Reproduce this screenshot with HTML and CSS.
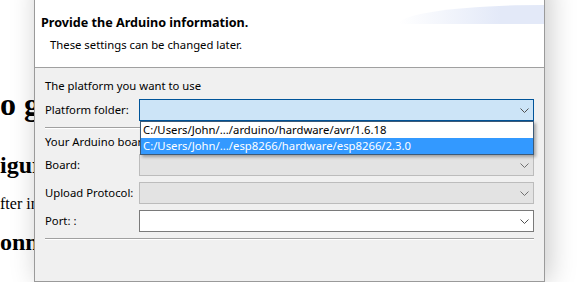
FILE: index.html
```html
<!DOCTYPE html>
<html lang="en">
<head>
    <meta charset="UTF-8">
    <meta name="viewport" content="width=device-width, initial-scale=1.0">
    <title>Arduino information</title>
    <link rel="stylesheet" href="styles.css">
</head>
<body>
    <!-- Page behind the dialog -->
    <div class="page">
        <h1>o ge</h1>
        <h2>igur</h2>
        <p>fter ins</p>
        <h2 class="last">onne</h2>
    </div>

    <!-- Wizard dialog -->
    <div class="dialog">
        <div class="dialog-head">
            <div class="swoosh"></div>
            <div class="head-title">Provide the Arduino information.</div>
            <div class="head-sub">These settings can be changed later.</div>
        </div>

        <div class="dialog-body">
            <div class="group-title">The platform you want to use</div>
            <div class="row">
                <label class="label">Platform folder:</label>
                <div class="combo combo-focus">
                    <svg class="chevron" width="9" height="5" viewBox="0 0 9 5"><polyline points="0.5,0.5 4.5,4.5 8.5,0.5" fill="none" stroke="#505050" stroke-width="1"/></svg>
                    <ul class="popup">
                        <li>C:/Users/John/.../arduino/hardware/avr/1.6.18</li>
                        <li class="selected">C:/Users/John/.../esp8266/hardware/esp8266/2.3.0</li>
                    </ul>
                </div>
            </div>

            <div class="sep"></div>

            <div class="group-title second">Your Arduino board specifications</div>
            <div class="row board">
                <label class="label">Board:</label>
                <div class="combo combo-disabled">
                    <svg class="chevron" width="9" height="5" viewBox="0 0 9 5"><polyline points="0.5,0.5 4.5,4.5 8.5,0.5" fill="none" stroke="#707070" stroke-width="1"/></svg>
                </div>
            </div>
            <div class="row">
                <label class="label">Upload Protocol:</label>
                <div class="combo combo-disabled">
                    <svg class="chevron" width="9" height="5" viewBox="0 0 9 5"><polyline points="0.5,0.5 4.5,4.5 8.5,0.5" fill="none" stroke="#707070" stroke-width="1"/></svg>
                </div>
            </div>
            <div class="row">
                <label class="label">Port: :</label>
                <div class="combo">
                    <svg class="chevron" width="9" height="5" viewBox="0 0 9 5"><polyline points="0.5,0.5 4.5,4.5 8.5,0.5" fill="none" stroke="#505050" stroke-width="1"/></svg>
                </div>
            </div>

            <div class="sep"></div>
        </div>
    </div>
</body>
</html>
```

FILE: styles.css
```css
html, body {
    overflow: hidden;
}
body {
    margin: 0;
    background-color: #fff;
    height: 282px;
    position: relative;
}
.page {
    font-family: 'Liberation Serif', serif;
    color: #000;
    white-space: nowrap;
}
.page h1 {
    font-size: 32px;
    margin: 0;
    padding-top: 86px;
    line-height: 36px;
}
.page h2 {
    font-size: 24px;
    margin: 29px 0 0;
    line-height: 28px;
}
.page p {
    font-size: 16px;
    margin: 15px 0 0;
    line-height: 20px;
}
.page h2.last {
    margin-top: 14px;
}
.dialog {
    position: absolute;
    left: 34px;
    top: -20px;
    width: 509px;
    height: 300px;
    border: 1px solid #9a9a9a;
    background-color: #f0f0f0;
    box-shadow: 4px 0 26px rgba(0, 0, 0, 0.22);
    font-family: 'Noto Sans', sans-serif;
    font-size: 11.3px;
    color: #000;
}
.dialog-head {
    position: relative;
    height: 87px;
    background-color: #fff;
    border-bottom: 1px solid #a0a0a0;
    box-sizing: border-box;
    padding-top: 34px;
}
.swoosh {
    position: absolute;
    right: 0;
    top: 24px;
    width: 145px;
    height: 19px;
    border-top-left-radius: 100% 100%;
    background: linear-gradient(to right, rgba(228, 234, 248, 0), #e3e9f8 70%);
}
.head-title {
    position: relative;
    font-size: 12.6px;
    font-weight: bold;
    line-height: 16px;
    padding-left: 6px;
}
.head-sub {
    position: relative;
    line-height: 16px;
    padding-left: 15px;
    margin-top: 6px;
}
.dialog-body {
    padding: 10px 10px 0 10px;
}
.group-title {
    line-height: 16px;
}
.group-title.second {
    margin-top: 5px;
}
.row {
    display: flex;
    align-items: center;
    margin-top: 6px;
}
.group-title + .row {
    margin-top: 5px;
}
.row.board {
    margin-top: 4px;
}
.label {
    width: 94px;
    flex: none;
    line-height: 16px;
}
.combo {
    position: relative;
    flex: 1;
    height: 22px;
    box-sizing: border-box;
    border: 1px solid #7a7a7a;
    background-color: #fff;
    display: flex;
    align-items: center;
    justify-content: flex-end;
    padding-right: 4px;
}
.combo-focus {
    border-color: #005499;
    background-color: #cce4f7;
}
.combo-disabled {
    border-color: #bcbcbc;
    background-color: #e3e3e3;
}
.chevron {
    display: block;
}
.popup {
    position: absolute;
    left: 0;
    right: -1px;
    top: 21px;
    margin: 0;
    padding: 0;
    list-style: none;
    border: 1px solid #3c5a78;
    background-color: #fff;
    box-shadow: 2px 2px 3px rgba(0, 0, 0, 0.3);
    z-index: 2;
}
.popup li {
    height: 16px;
    line-height: 16px;
    padding-left: 2px;
    color: #000;
}
.popup li.selected {
    background-color: #3399ff;
    color: #fff;
}
.sep {
    height: 1px;
    border-top: 1px solid #a0a0a0;
    background-color: #fff;
    margin-top: 6px;
}
```
